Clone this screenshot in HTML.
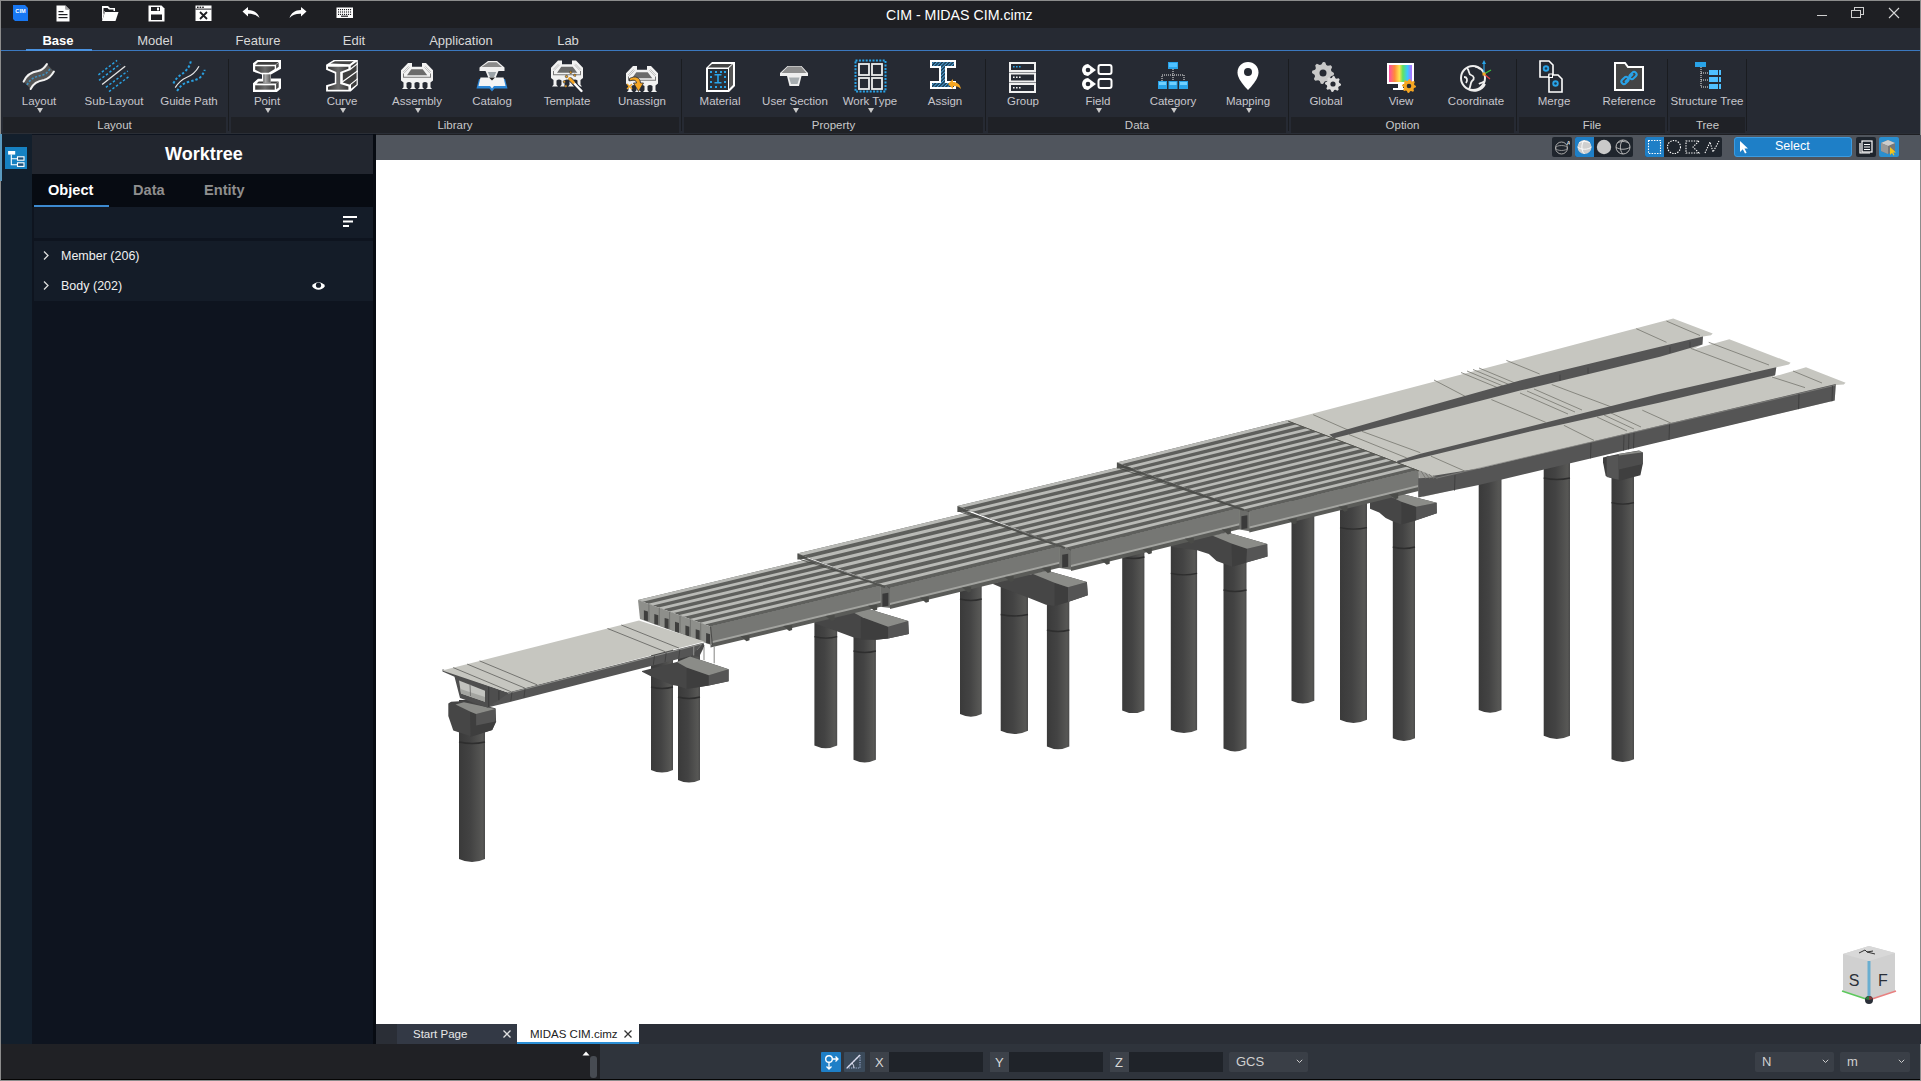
<!DOCTYPE html><html><head><meta charset="utf-8"><style>
*{margin:0;padding:0;box-sizing:border-box}
html,body{width:1921px;height:1081px;overflow:hidden;background:#1e1f23;font-family:"Liberation Sans",sans-serif}
.a{position:absolute}
.t{position:absolute;white-space:nowrap;line-height:1}
.mtab{position:absolute;top:34px;font-size:13px;color:#d8d8d8;white-space:nowrap;line-height:1;transform:translateX(-50%)}
.btxt{position:absolute;top:96px;font-size:11.5px;color:#c6c6cc;white-space:nowrap;line-height:1;transform:translateX(-50%)}
.arr{position:absolute;top:108px;width:0;height:0;border-left:3px solid transparent;border-right:3px solid transparent;border-top:5px solid #c8c8c8;transform:translateX(-50%)}
.glab{position:absolute;top:117px;height:16px;background:#1f2126}
.gtxt{position:absolute;top:120px;font-size:11.5px;color:#c9c9c9;line-height:1;white-space:nowrap;transform:translateX(-50%)}
.sep{position:absolute;top:59px;width:1px;height:72px;background:#1a1c21}
.ic{position:absolute;top:59px;width:32px;height:34px}
</style></head><body>
<div class="a" style="left:0px;top:0px;width:1921px;height:1081px;background:#1e1f23;"></div>
<div class="a" style="left:0px;top:0px;width:1921px;height:1px;background:#8c8c8c;"></div>
<svg class="a" style="left:12px;top:5px" width="17" height="17" viewBox="0 0 17 17"><path d="M1,0 H13 L16,3 V16 H3 L1,14 Z" fill="#1877f2"/><text x="8.5" y="7.6" font-size="5.6" font-weight="bold" fill="#fff" text-anchor="middle" font-family="Liberation Sans">CIM</text></svg>
<svg class="a" style="left:56px;top:5px" width="14" height="17" viewBox="0 0 14 17"><path d="M0.5,0.5 H9.5 L13.5,4.5 V16.5 H0.5 Z" fill="#fff"/><path d="M9.5,0.5 V4.5 H13.5" fill="#1e1f23"/><path d="M9.5,0.5 L13.5,4.5 H9.5Z" fill="#fff" opacity="0.6"/><rect x="2.5" y="6" width="5" height="1.2" fill="#1e1f23"/><rect x="2.5" y="9" width="9" height="1.2" fill="#1e1f23"/><rect x="2.5" y="12" width="9" height="1.2" fill="#1e1f23"/></svg>
<svg class="a" style="left:102px;top:6px" width="17" height="16" viewBox="0 0 17 16"><path d="M0,0 H6 L8,2 H13 V5 H3 L0,15 Z" fill="#fff"/><path d="M3,6 H16.5 L13.5,15 H0 Z" fill="#fff"/><path d="M1.5,2 H5.5 L7,3.5 H11.5 V5 H2.5 L1.5,9 Z" fill="#1e1f23"/></svg>
<svg class="a" style="left:148px;top:5px" width="17" height="17" viewBox="0 0 17 17"><path d="M0.5,0.5 H13.5 L16.5,3.5 V16.5 H0.5 Z" fill="#fff"/><rect x="3" y="2" width="9" height="4" fill="#1e1f23"/><rect x="9" y="2.6" width="2" height="2.8" fill="#fff"/><rect x="3" y="9.5" width="11" height="5.5" fill="#1e1f23"/></svg>
<svg class="a" style="left:195px;top:5px" width="17" height="16" viewBox="0 0 17 16"><rect x="0.5" y="0.5" width="16" height="15.5" fill="#fff"/><rect x="1.5" y="4" width="14" height="11" fill="#fff"/><rect x="0.5" y="3.6" width="16" height="1" fill="#1e1f23"/><rect x="2" y="1.6" width="1.6" height="1.4" fill="#1e1f23"/><rect x="4.6" y="1.6" width="1.6" height="1.4" fill="#1e1f23"/><rect x="7.2" y="1.6" width="1.6" height="1.4" fill="#1e1f23"/><path d="M5,7 L12,14 M12,7 L5,14" stroke="#1e1f23" stroke-width="1.8"/></svg>
<svg class="a" style="left:242px;top:7px" width="18" height="12" viewBox="0 0 18 12"><path d="M0.5,4.5 L6,0 V3 C12,3 16,6 17.5,11 C14.5,8 11,6.6 6,6.8 V9.6 Z" fill="#fff"/></svg>
<svg class="a" style="left:289px;top:7px" width="18" height="12" viewBox="0 0 18 12"><path d="M17.5,4.5 L12,0 V3 C6,3 2,6 0.5,11 C3.5,8 7,6.6 12,6.8 V9.6 Z" fill="#fff"/></svg>
<svg class="a" style="left:336px;top:7px" width="18" height="12" viewBox="0 0 18 12"><rect x="0.5" y="0.5" width="16.5" height="10.5" fill="#fff"/><rect x="2" y="2.0" width="1.1" height="1.2" fill="#1e1f23"/><rect x="2" y="4.4" width="1.1" height="1.2" fill="#1e1f23"/><rect x="2" y="6.8" width="1.1" height="1.2" fill="#1e1f23"/><rect x="4" y="2.0" width="1.1" height="1.2" fill="#1e1f23"/><rect x="4" y="4.4" width="1.1" height="1.2" fill="#1e1f23"/><rect x="4" y="6.8" width="1.1" height="1.2" fill="#1e1f23"/><rect x="6" y="2.0" width="1.1" height="1.2" fill="#1e1f23"/><rect x="6" y="4.4" width="1.1" height="1.2" fill="#1e1f23"/><rect x="6" y="6.8" width="1.1" height="1.2" fill="#1e1f23"/><rect x="8" y="2.0" width="1.1" height="1.2" fill="#1e1f23"/><rect x="8" y="4.4" width="1.1" height="1.2" fill="#1e1f23"/><rect x="8" y="6.8" width="1.1" height="1.2" fill="#1e1f23"/><rect x="10" y="2.0" width="1.1" height="1.2" fill="#1e1f23"/><rect x="10" y="4.4" width="1.1" height="1.2" fill="#1e1f23"/><rect x="10" y="6.8" width="1.1" height="1.2" fill="#1e1f23"/><rect x="12" y="2.0" width="1.1" height="1.2" fill="#1e1f23"/><rect x="12" y="4.4" width="1.1" height="1.2" fill="#1e1f23"/><rect x="12" y="6.8" width="1.1" height="1.2" fill="#1e1f23"/><rect x="14" y="2.0" width="1.1" height="1.2" fill="#1e1f23"/><rect x="14" y="4.4" width="1.1" height="1.2" fill="#1e1f23"/><rect x="14" y="6.8" width="1.1" height="1.2" fill="#1e1f23"/><rect x="5" y="8.6" width="7" height="1.2" fill="#1e1f23"/></svg>
<div class="t" style="left:886px;top:8px;font-size:14.2px;color:#ffffff;">CIM - MIDAS CIM.cimz</div>
<div class="a" style="left:1817px;top:15px;width:10px;height:1px;background:#d0d0d0;"></div>
<svg class="a" style="left:1851px;top:7px" width="14" height="12" viewBox="0 0 14 12"><rect x="3.5" y="0.5" width="9" height="7" fill="none" stroke="#d0d0d0"/><rect x="0.5" y="3.5" width="9" height="7" fill="#1e1f23" stroke="#d0d0d0"/></svg>
<svg class="a" style="left:1888px;top:7px" width="12" height="12" viewBox="0 0 12 12"><path d="M1,1 L11,11 M11,1 L1,11" stroke="#d8d8d8" stroke-width="1.1"/></svg>
<div class="a" style="left:1920px;top:0px;width:1px;height:1081px;background:#8c8c8c;"></div>
<div class="a" style="left:1px;top:28px;width:1919px;height:22px;background:#262a33;"></div>
<div class="a" style="left:1px;top:50px;width:1919px;height:1px;background:#3b78bf;"></div>
<div class="a" style="left:26px;top:49px;width:66px;height:2px;background:#4a92e0;"></div>
<div class="mtab" style="left:58px;color:#ffffff;font-weight:bold">Base</div>
<div class="mtab" style="left:155px">Model</div>
<div class="mtab" style="left:258px">Feature</div>
<div class="mtab" style="left:354px">Edit</div>
<div class="mtab" style="left:461px">Application</div>
<div class="mtab" style="left:568px">Lab</div>
<div class="a" style="left:1px;top:51px;width:1919px;height:83px;background:#262a33;"></div>
<div class="a" style="left:3px;top:117px;width:223px;height:16px;background:#1f2126;"></div>
<div class="gtxt" style="left:114.5px">Layout</div>
<div class="a" style="left:231px;top:117px;width:448px;height:16px;background:#1f2126;"></div>
<div class="gtxt" style="left:455.0px">Library</div>
<div class="a" style="left:684px;top:117px;width:299px;height:16px;background:#1f2126;"></div>
<div class="gtxt" style="left:833.5px">Property</div>
<div class="a" style="left:988px;top:117px;width:298px;height:16px;background:#1f2126;"></div>
<div class="gtxt" style="left:1137.0px">Data</div>
<div class="a" style="left:1291px;top:117px;width:223px;height:16px;background:#1f2126;"></div>
<div class="gtxt" style="left:1402.5px">Option</div>
<div class="a" style="left:1519px;top:117px;width:146px;height:16px;background:#1f2126;"></div>
<div class="gtxt" style="left:1592.0px">File</div>
<div class="a" style="left:1670px;top:117px;width:75px;height:16px;background:#1f2126;"></div>
<div class="gtxt" style="left:1707.5px">Tree</div>
<div class="a" style="left:228px;top:59px;width:1px;height:72px;background:#1a1c20;"></div>
<div class="a" style="left:681px;top:59px;width:1px;height:72px;background:#1a1c20;"></div>
<div class="a" style="left:985px;top:59px;width:1px;height:72px;background:#1a1c20;"></div>
<div class="a" style="left:1288px;top:59px;width:1px;height:72px;background:#1a1c20;"></div>
<div class="a" style="left:1516px;top:59px;width:1px;height:72px;background:#1a1c20;"></div>
<div class="a" style="left:1667px;top:59px;width:1px;height:72px;background:#1a1c20;"></div>
<div class="a" style="left:1746px;top:59px;width:1px;height:72px;background:#1a1c20;"></div>
<div class="a" style="left:1px;top:133px;width:1919px;height:1px;background:#2a2e36;"></div>
<svg class="a" style="left:23px;top:59px" width="32" height="34" viewBox="0 0 32 34" overflow="visible"><path d="M0.6,22.6 C3,17 8,13 15,12 C20,11 22,8 23.9,5.1 L30.9,12.6 C29,16 26,20 21,21 C14,22 10,25 7.6,30 Z" fill="#555"/><path d="M0.6,22.6 C3,17 8,13 15,12 C20,11 22,8 23.9,5.1" stroke="#f2f2f2" stroke-width="2" fill="none" stroke-linecap="round"/><path d="M7.6,30 C10,25 14,22 21,21 C26,20 29,16 30.9,12.6" stroke="#f2f2f2" stroke-width="2" fill="none" stroke-linecap="round"/><path d="M4,26 C7,20 12,17.5 18,16.5 C23,15.5 26,12 27.4,8.8" stroke="#3d8fbf" stroke-width="1.6" fill="none" stroke-dasharray="2.2 1.6"/></svg>
<div class="btxt" style="left:39px">Layout</div>
<div class="arr" style="left:39.5px"></div>
<svg class="a" style="left:98px;top:59px" width="32" height="34" viewBox="0 0 32 34" overflow="visible"><path d="M4.1,25.4 L27.2,7.3" stroke="#e6e6e6" stroke-width="1.3"/><path d="M0.4,15.8 L19.1,1.4 M1,21.4 L22.2,5.1 M7.9,28.3 L29.8,12 M11,32.6 L31.6,17" stroke="#2aa0e0" stroke-width="1.5" stroke-dasharray="2.4 2" fill="none"/></svg>
<div class="btxt" style="left:114px">Sub-Layout</div>
<svg class="a" style="left:173px;top:59px" width="32" height="34" viewBox="0 0 32 34" overflow="visible"><path d="M2.2,28.6 C6,23 9,20.5 13,18.8 C18,16.8 23,13 26,7.3" stroke="#e6e6e6" stroke-width="1.2" fill="none"/><path d="M0.4,24.5 C3,19 6,17 9,15 C13,12 17,8 17.9,1.4" stroke="#2aa0e0" stroke-width="2" stroke-dasharray="2.4 2" fill="none"/><path d="M4.1,32 C8,26 11,24 15,23 C21,21.5 26,20 27.5,18 C30,15 31.5,13 31.6,10.8" stroke="#2aa0e0" stroke-width="2" stroke-dasharray="2.4 2" fill="none"/></svg>
<div class="btxt" style="left:189px">Guide Path</div>
<svg class="a" style="left:251px;top:59px" width="32" height="34" viewBox="0 0 32 34" overflow="visible"><defs><linearGradient id="gI" x1="0" x2="1"><stop offset="0" stop-color="#3a3a3a"/><stop offset="0.5" stop-color="#6a6a6a"/><stop offset="1" stop-color="#3a3a3a"/></linearGradient><linearGradient id="gW" x1="0" x2="1"><stop offset="0" stop-color="#666"/><stop offset="0.3" stop-color="#aaa"/><stop offset="1" stop-color="#555"/></linearGradient></defs><path d="M2,4.2 L6.3,0.9 H30 V9.8 L20,15.5 V19.6 H30 V29.6 L25.9,33.1 H2 V24.2 L7,19.8 H11 V15.5 L2,12.6 Z" fill="#fff"/><path d="M4.2,5.7 L7,3.1 H27.7 L24.4,5.7 Z" fill="#3d3d3d"/><path d="M4.2,7.2 H23.7 V10 L17.7,13.7 H10 L4.2,10.7 Z" fill="url(#gI)"/><path d="M25.1,5.5 L27.7,3.7 V7.7 L25.1,9.8 Z" fill="#4a4a4a"/><path d="M12.2,15.3 H19.6 V23.7 H12.2 Z" fill="url(#gW)"/><path d="M5.5,24.6 L7.7,22.4 H12.2 V23.7 H19.6 V22.4 H27.7 L24.8,24.6 Z" fill="#3d3d3d"/><path d="M4.2,26.3 H23.7 V30.7 H4.2 Z" fill="url(#gI)"/><path d="M25.1,24.4 L27.7,22.6 V28.5 L25.1,30.5 Z" fill="#4a4a4a"/></svg>
<div class="btxt" style="left:267px">Point</div>
<div class="arr" style="left:267.5px"></div>
<svg class="a" style="left:326px;top:59px" width="32" height="34" viewBox="0 0 32 34" overflow="visible"><path d="M0.1,5.7 L7.7,1.1 H31.8 V25.9 L24.7,32.6 H0.1 V26.3 L8.8,23.7 V14.4 L0.1,10.7 Z" fill="#fff"/><path d="M4.5,4.5 L9,2.3 H28.5 L23.8,5.3 Z" fill="#444"/><path d="M24.8,7 L30.6,2.8 V25.4 L25,29.8 V26 L16.8,23.6 V14 L24.8,11 Z" fill="#3e3e3e"/><path d="M2,7.7 H22.4 V9.8 L14.2,13 V25 L22.4,27.6 V30.8 H2 V27.8 L10.3,25 V13 L2,9.6 Z" fill="url(#gI)"/><path d="M24,5.9 L29.6,1.4 M24.4,10.3 L31.8,4.4 M16.2,22.9 L31.8,11.8 M24,25.9 L31.8,19.6" stroke="#fff" stroke-width="1.2"/></svg>
<div class="btxt" style="left:342px">Curve</div>
<div class="arr" style="left:342.5px"></div>
<svg class="a" style="left:401px;top:59px" width="32" height="34" viewBox="0 0 32 34" overflow="visible"><g transform="translate(0,0) scale(1.0)"><path d="M0,11.3 L7,4 H11 V7.7 H21 V4 H25 L32,11.3 V21.5 L29.5,23.5 V28.3 L31,30 H25 L26.5,28.3 V24 Q24,21.8 21.5,24 V28.3 L23,30 H17 L18.5,28.3 V24 Q16,21.8 13.5,24 V28.3 L15,30 H9 L10.5,28.3 V24 Q8,21.8 5.5,24 V28.3 L7,30 H1 L2.5,28.3 V23.5 L0,21.5 Z" fill="#f2f2f2"/><path d="M6,16.3 L10.3,10.3 H21.7 L26.3,16.3 Z" fill="#6b6b6b"/><path d="M2.2,13 L7.6,7.3 M3.2,14 L8.6,8.3 M29.8,13 L24.4,7.3 M28.8,14 L23.4,8.3" stroke="#9a9a9a" stroke-width="0.6"/><path d="M2,14.5 V18.8 H30 V14.5 H29 V17.8 H3 V14.5 Z" fill="#7a7a7a"/></g></svg>
<div class="btxt" style="left:417px">Assembly</div>
<div class="arr" style="left:417.5px"></div>
<svg class="a" style="left:476px;top:57.5px" width="32" height="34" viewBox="0 0 32 34" overflow="visible"><path d="M12,3 H21 L28.5,9.5 V13 H3.5 V9.5 Z" fill="#f0f0f0"/><path d="M12.5,4.3 H20.5 L26,9 H5.5 Z" fill="#8a8a8a"/><path d="M9.5,13 H22.5 L19.5,20 H12.5 Z" fill="#eee"/><path d="M11.8,14 H20.2 L18,19 H14 Z" fill="#9ba3a8"/><path d="M0.5,30.5 L3,21 H29 L31.5,30.5 H18.5 L16,33.5 L13.5,30.5 Z" fill="#2b86d6"/><path d="M2.5,28 L4.5,19.5 H27.5 L29.5,28 H18 L16,30.5 L14,28 Z" fill="#f4f4f4"/><path d="M13,19.5 H19 L16,22.5 Z" fill="#222"/></svg>
<div class="btxt" style="left:492px">Catalog</div>
<svg class="a" style="left:551px;top:59px" width="32" height="34" viewBox="0 0 32 34" overflow="visible"><g transform="translate(0,-2.5) scale(1.0)"><path d="M0,11.3 L7,4 H11 V7.7 H21 V4 H25 L32,11.3 V21.5 L29.5,23.5 V28.3 L31,30 H25 L26.5,28.3 V24 Q24,21.8 21.5,24 V28.3 L23,30 H17 L18.5,28.3 V24 Q16,21.8 13.5,24 V28.3 L15,30 H9 L10.5,28.3 V24 Q8,21.8 5.5,24 V28.3 L7,30 H1 L2.5,28.3 V23.5 L0,21.5 Z" fill="#f2f2f2"/><path d="M6,16.3 L10.3,10.3 H21.7 L26.3,16.3 Z" fill="#6b6b6b"/><path d="M2.2,13 L7.6,7.3 M3.2,14 L8.6,8.3 M29.8,13 L24.4,7.3 M28.8,14 L23.4,8.3" stroke="#9a9a9a" stroke-width="0.6"/><path d="M2,14.5 V18.8 H30 V14.5 H29 V17.8 H3 V14.5 Z" fill="#7a7a7a"/></g><path d="M17,17 L24,16 L27,26 L20,27 Z" fill="#262a33" opacity="0"/><path d="M19.5,20.5 L30.5,32" stroke="#262a33" stroke-width="4.2" stroke-linecap="round"/><path d="M19.5,20.5 L30.5,32" stroke="#fff" stroke-width="2.4" stroke-linecap="round"/><path d="M18.5,19.5 L22.5,23.5" stroke="#f5a623" stroke-width="2.6" stroke-linecap="round"/><path d="M14,17 l2,-1 1,2 -2,1z M18.5,12.5 l2,-0.5 0.5,2.2 -2,0.5z M23,15 l2,0.5 -0.5,2 -2,-0.5z M12,22 l2,-0.5 0.6,2 -2,0.6z M13.5,26.5 l2,-0.7 0.7,2 -2,0.7z" fill="#f5a623" stroke="#262a33" stroke-width="0.5"/></svg>
<div class="btxt" style="left:567px">Template</div>
<svg class="a" style="left:626px;top:59px" width="32" height="34" viewBox="0 0 32 34" overflow="visible"><g transform="translate(0,3) scale(1.0)"><path d="M0,11.3 L7,4 H11 V7.7 H21 V4 H25 L32,11.3 V21.5 L29.5,23.5 V28.3 L31,30 H25 L26.5,28.3 V24 Q24,21.8 21.5,24 V28.3 L23,30 H17 L18.5,28.3 V24 Q16,21.8 13.5,24 V28.3 L15,30 H9 L10.5,28.3 V24 Q8,21.8 5.5,24 V28.3 L7,30 H1 L2.5,28.3 V23.5 L0,21.5 Z" fill="#f2f2f2"/><path d="M6,16.3 L10.3,10.3 H21.7 L26.3,16.3 Z" fill="#6b6b6b"/><path d="M2.2,13 L7.6,7.3 M3.2,14 L8.6,8.3 M29.8,13 L24.4,7.3 M28.8,14 L23.4,8.3" stroke="#9a9a9a" stroke-width="0.6"/><path d="M2,14.5 V18.8 H30 V14.5 H29 V17.8 H3 V14.5 Z" fill="#7a7a7a"/></g><path d="M1,25 L6,30 M6,25 L1,30" stroke="#f5a623" stroke-width="1.3"/><path d="M3.5,19.5 C9,16.5 14,18 14.5,24 H17.5 L12.5,32.5 L7.5,24 H10.5 C10.3,21 7.5,20.5 3.5,22 Z" fill="#f5a623" stroke="#262a33" stroke-width="0.8"/></svg>
<div class="btxt" style="left:642px">Unassign</div>
<svg class="a" style="left:704px;top:60px" width="32" height="34" viewBox="0 0 32 34" overflow="visible"><path d="M2,8 L8,2 H31 V26 L25,32 H2 Z" fill="#fff"/><path d="M4,9 H24 V30 H4 Z" fill="#2a2f36"/><path d="M25,8 L29,4 V25 L25,29 Z" fill="#555"/><path d="M4,7.5 L8,4 H28 L24,7.5 Z" fill="#444"/><path d="M6,11 h2 v2 h-2z M11,11 h2 v2 h-2z M16,11 h2 v2 h-2z M20,11 h2 v2 h-2z M6,26 h2 v2 h-2z M11,26 h2 v2 h-2z M16,26 h2 v2 h-2z M20,26 h2 v2 h-2z M6,16 h2 v2 h-2z M6,21 h2 v2 h-2z M20,16 h2 v2 h-2z M20,21 h2 v2 h-2z" fill="#29a3e8"/><path d="M10.5,14 H17.5 V15.5 H14.8 V22 H17.5 V23.5 H10.5 V22 H13.2 V15.5 H10.5Z" fill="#29a3e8"/></svg>
<div class="btxt" style="left:720px">Material</div>
<svg class="a" style="left:779px;top:59px" width="32" height="34" viewBox="0 0 32 34" overflow="visible"><path d="M8.5,7 H22.5 L29,14 V17 H1 V14 Z" fill="#eee"/><path d="M9,7.5 H22 L27.5,14 H2.5 Z" fill="#8e8e8e"/><path d="M8,17 H22.5 L20,27 H10.5 Z" fill="#eee"/><path d="M10,18.5 H20.5 L18.5,25 H12 Z" fill="#a7adb0"/></svg>
<div class="btxt" style="left:795px">User Section</div>
<div class="arr" style="left:795.5px"></div>
<svg class="a" style="left:854px;top:59px" width="32" height="34" viewBox="0 0 32 34" overflow="visible"><rect x="1.5" y="1.5" width="30" height="31" fill="none" stroke="#29a3e8" stroke-width="2" stroke-dasharray="2 1.4"/><rect x="5" y="5" width="10" height="11" fill="none" stroke="#eee" stroke-width="1.8"/><rect x="18" y="5" width="10" height="11" fill="none" stroke="#eee" stroke-width="1.8"/><rect x="5" y="19" width="10" height="11" fill="none" stroke="#eee" stroke-width="1.8"/><rect x="18" y="19" width="10" height="11" fill="none" stroke="#eee" stroke-width="1.8"/></svg>
<div class="btxt" style="left:870px">Work Type</div>
<div class="arr" style="left:870.5px"></div>
<svg class="a" style="left:929px;top:59px" width="32" height="34" viewBox="0 0 32 34" overflow="visible"><defs><pattern id="hatch" width="2.5" height="2.5" patternUnits="userSpaceOnUse" patternTransform="rotate(45)"><rect width="2.5" height="2.5" fill="#1b3a52"/><rect width="1" height="2.5" fill="#4fa3d8"/></pattern></defs><path d="M1,1 H27 V9 H18 V22 H27 V30 H1 V22 H10 V9 H1 Z" fill="#fff"/><path d="M3,3 H25 V7 H16 V24 H25 V28 H3 V24 H12 V7 H3 Z" fill="url(#hatch)"/><path d="M19,25 L24,20 V23 C28,23 31,25 32,30 C30,28 28,27 24,27 V30 Z" fill="#f5a623"/></svg>
<div class="btxt" style="left:945px">Assign</div>
<svg class="a" style="left:1007px;top:60.5px" width="32" height="34" viewBox="0 0 32 34" overflow="visible"><rect x="3" y="2.0" width="25" height="8" fill="none" stroke="#f0f0f0" stroke-width="2"/><rect x="3" y="12.5" width="25" height="8" fill="none" stroke="#f0f0f0" stroke-width="2"/><rect x="3" y="23.0" width="25" height="8" fill="none" stroke="#f0f0f0" stroke-width="2"/><path d="M6,5 h1.6 v1.6 h-1.6z M9,5 h1.6 v1.6 h-1.6z M12,5 h1.6 v1.6 h-1.6z" fill="#29a3e8"/><path d="M6,15.5 h1.6 v1.6 h-1.6z M9,15.5 h1.6 v1.6 h-1.6z M12,15.5 h1.6 v1.6 h-1.6z" fill="#f0f0f0"/><path d="M6,26.0 h1.6 v1.6 h-1.6z M9,26.0 h1.6 v1.6 h-1.6z M12,26.0 h1.6 v1.6 h-1.6z" fill="#f0f0f0"/></svg>
<div class="btxt" style="left:1023px">Group</div>
<svg class="a" style="left:1082px;top:60.5px" width="32" height="34" viewBox="0 0 32 34" overflow="visible"><path d="M6,3 A6,6 0 1 0 6,15 L14,9 Z" fill="#fff"/><circle cx="6" cy="9" r="2.3" fill="#262a33"/><path d="M6,17 A6,6 0 1 0 6,29 L14,23 Z" fill="#fff"/><circle cx="6" cy="23" r="2.3" fill="#262a33"/><rect x="16.5" y="4" width="13" height="9" rx="2" fill="none" stroke="#fff" stroke-width="2"/><rect x="16.5" y="18" width="13" height="9" rx="2" fill="none" stroke="#fff" stroke-width="2"/></svg>
<div class="btxt" style="left:1098px">Field</div>
<div class="arr" style="left:1098.5px"></div>
<svg class="a" style="left:1157px;top:60.5px" width="32" height="34" viewBox="0 0 32 34" overflow="visible"><rect x="11" y="1" width="10" height="7" fill="#29a3e8"/><rect x="12" y="2" width="8" height="4" fill="#4fc0ff"/><path d="M16,8 V14 M5,20 V14 H27 V20 M16,14 V20" stroke="#eee" stroke-width="1" stroke-dasharray="1 1" fill="none"/><rect x="1" y="20" width="9" height="8" fill="#29a3e8"/><rect x="11.5" y="20" width="9" height="8" fill="#29a3e8"/><rect x="22" y="20" width="9" height="8" fill="#29a3e8"/><rect x="2" y="21" width="7" height="3" fill="#6fd0ff"/><rect x="12.5" y="21" width="7" height="3" fill="#6fd0ff"/><rect x="23" y="21" width="7" height="3" fill="#6fd0ff"/></svg>
<div class="btxt" style="left:1173px">Category</div>
<div class="arr" style="left:1173.5px"></div>
<svg class="a" style="left:1232px;top:60.5px" width="32" height="34" viewBox="0 0 32 34" overflow="visible"><path d="M16,1 C10,1 5.5,5.5 5.5,11.5 C5.5,19 16,29 16,29 C16,29 26.5,19 26.5,11.5 C26.5,5.5 22,1 16,1 Z" fill="#fff"/><circle cx="16" cy="11" r="4" fill="#262a33"/></svg>
<div class="btxt" style="left:1248px">Mapping</div>
<div class="arr" style="left:1248.5px"></div>
<svg class="a" style="left:1310px;top:60.5px" width="32" height="34" viewBox="0 0 32 34" overflow="visible"><polygon points="24.00,12.00 23.79,14.15 20.93,15.28 20.13,16.77 20.78,19.78 19.11,21.15 16.28,19.93 14.67,20.42 13.00,23.00 10.85,22.79 9.72,19.93 8.23,19.13 5.22,19.78 3.85,18.11 5.07,15.28 4.58,13.67 2.00,12.00 2.21,9.85 5.07,8.72 5.87,7.23 5.22,4.22 6.89,2.85 9.72,4.07 11.33,3.58 13.00,1.00 15.15,1.21 16.28,4.07 17.77,4.87 20.78,4.22 22.15,5.89 20.93,8.72 21.42,10.33" fill="#c8c8c8"/><circle cx="13" cy="12" r="3.5" fill="#262a33"/><polygon points="31.00,23.00 30.85,24.56 28.77,25.39 28.19,26.47 28.66,28.66 27.44,29.65 25.39,28.77 24.22,29.12 23.00,31.00 21.44,30.85 20.61,28.77 19.53,28.19 17.34,28.66 16.35,27.44 17.23,25.39 16.88,24.22 15.00,23.00 15.15,21.44 17.23,20.61 17.81,19.53 17.34,17.34 18.56,16.35 20.61,17.23 21.78,16.88 23.00,15.00 24.56,15.15 25.39,17.23 26.47,17.81 28.66,17.34 29.65,18.56 28.77,20.61 29.12,21.78" fill="#dcdcdc"/><circle cx="23" cy="23" r="2.6" fill="#262a33"/></svg>
<div class="btxt" style="left:1326px">Global</div>
<svg class="a" style="left:1385px;top:60.5px" width="32" height="34" viewBox="0 0 32 34" overflow="visible"><defs><linearGradient id="rb" x1="0" x2="1"><stop offset="0" stop-color="#ff4da6"/><stop offset="0.25" stop-color="#ff8c3a"/><stop offset="0.45" stop-color="#ffe34d"/><stop offset="0.6" stop-color="#5fe35f"/><stop offset="0.8" stop-color="#3ac8ff"/><stop offset="1" stop-color="#b46bff"/></linearGradient></defs><rect x="2" y="2" width="27" height="21" fill="#fff"/><rect x="4" y="4" width="23" height="17" fill="url(#rb)"/><rect x="13" y="23" width="5" height="4" fill="#fff"/><rect x="8" y="27" width="14" height="2" fill="#fff"/><polygon points="31.00,25.00 30.87,26.37 29.04,27.09 28.54,28.03 28.95,29.95 27.89,30.82 26.09,30.04 25.07,30.36 24.00,32.00 22.63,31.87 21.91,30.04 20.97,29.54 19.05,29.95 18.18,28.89 18.96,27.09 18.64,26.07 17.00,25.00 17.13,23.63 18.96,22.91 19.46,21.97 19.05,20.05 20.11,19.18 21.91,19.96 22.93,19.64 24.00,18.00 25.37,18.13 26.09,19.96 27.03,20.46 28.95,20.05 29.82,21.11 29.04,22.91 29.36,23.93" fill="#f5a623"/><circle cx="24" cy="25" r="2.3" fill="#262a33"/></svg>
<div class="btxt" style="left:1401px">View</div>
<svg class="a" style="left:1460px;top:60px" width="32" height="34" viewBox="0 0 32 34" overflow="visible"><circle cx="13" cy="18" r="12" fill="none" stroke="#eee" stroke-width="2"/><path d="M7,8 C10,11 8,14 11,15 C14,16 15,19 12,21 C10,23 11,27 9,29 M4,17 C7,17 8,20 6,23 M19,24 C21,22 24,23 24,21" stroke="#eee" stroke-width="1.8" fill="none"/><path d="M15,7 C17,6 18,8 20,9" stroke="#eee" stroke-width="1.8" fill="none"/><path d="M24,14 V2" stroke="#29a3e8" stroke-width="1.2"/><path d="M22,4 L24,0 L26,4Z" fill="#29a3e8"/><path d="M24,14 L31,10" stroke="#3ec43e" stroke-width="1.2"/><path d="M24,14 L30,19" stroke="#e83a3a" stroke-width="1.2"/><rect x="22.5" y="12.5" width="3" height="3" fill="#f5a623"/><path d="M25,24 A12,12 0 0 1 8,29" stroke="#eee" stroke-width="2" fill="none"/></svg>
<div class="btxt" style="left:1476px">Coordinate</div>
<svg class="a" style="left:1538px;top:60px" width="32" height="34" viewBox="0 0 32 34" overflow="visible"><path d="M2,1 H11 L15,5 V17 H2 Z" fill="none" stroke="#fff" stroke-width="1.6"/><circle cx="8" cy="8.5" r="3.2" fill="#29a3e8"/><circle cx="8" cy="8.5" r="1.3" fill="#1b3a52"/><path d="M11,15 H20 L24,19 V32 H11 Z" fill="#262a33" stroke="#fff" stroke-width="1.6"/><circle cx="17.5" cy="23.5" r="3.2" fill="#29a3e8"/><circle cx="17.5" cy="23.5" r="1.3" fill="#1b3a52"/><rect x="11" y="14" width="3.5" height="3.5" fill="#262a33" stroke="#fff" stroke-width="1"/></svg>
<div class="btxt" style="left:1554px">Merge</div>
<svg class="a" style="left:1613px;top:60px" width="32" height="34" viewBox="0 0 32 34" overflow="visible"><path d="M2,3 H12 L15,7 H30 V30 H2 Z" fill="#444" stroke="#fff" stroke-width="2"/><path d="M12,22 L20,14" stroke="#29a3e8" stroke-width="2"/><rect x="8" y="18" width="8" height="5" rx="2.5" transform="rotate(-45 12 20.5)" fill="none" stroke="#29a3e8" stroke-width="2"/><rect x="16" y="13" width="8" height="5" rx="2.5" transform="rotate(-45 20 15.5)" fill="none" stroke="#29a3e8" stroke-width="2"/></svg>
<div class="btxt" style="left:1629px">Reference</div>
<svg class="a" style="left:1691px;top:60px" width="32" height="34" viewBox="0 0 32 34" overflow="visible"><rect x="4" y="2" width="11" height="5" fill="#29a3e8"/><path d="M10,7 V27 H17 M10,13 H17 M10,20 H17" stroke="#eee" stroke-width="1" stroke-dasharray="1 1" fill="none"/><rect x="18" y="10" width="9" height="5" fill="#4fc0ff"/><rect x="28" y="10" width="2" height="5" fill="#4fc0ff"/><rect x="18" y="17" width="9" height="5" fill="#4fc0ff"/><rect x="28" y="17" width="2" height="5" fill="#4fc0ff"/><rect x="18" y="24" width="9" height="5" fill="#4fc0ff"/><rect x="28" y="24" width="2" height="5" fill="#4fc0ff"/></svg>
<div class="btxt" style="left:1707px">Structure Tree</div>
<div class="a" style="left:0px;top:1px;width:1px;height:1080px;background:#8c8c8c;"></div>
<div class="a" style="left:1px;top:134px;width:32px;height:910px;background:#131f2c;"></div>
<div class="a" style="left:0px;top:134px;width:2px;height:47px;background:#5a9ac0;"></div>
<svg class="a" style="left:5px;top:147px" width="22" height="22" viewBox="0 0 22 22"><rect width="22" height="22" fill="#1681c2"/><rect x="3.1" y="4" width="7.1" height="3.6" fill="#fff"/><path d="M6.3,7.6 V17.7 H12.5 M6.3,11.7 H12.5" stroke="#fff" stroke-width="1.1" fill="none"/><rect x="12.5" y="9.8" width="6.5" height="3.4" fill="#1b4f7a" stroke="#fff" stroke-width="1.1"/><rect x="12.5" y="15.8" width="6.5" height="3.6" fill="#1b4f7a" stroke="#fff" stroke-width="1.1"/></svg>
<div class="a" style="left:32px;top:134px;width:344px;height:910px;background:#0e141f;"></div>
<div class="a" style="left:32px;top:135px;width:341px;height:39px;background:#22262f;"></div>
<div class="t" style="left:165px;top:145px;font-size:18px;color:#ffffff;font-weight:bold">Worktree</div>
<div class="a" style="left:32px;top:174px;width:344px;height:33px;background:#070b12;"></div>
<div class="t" style="left:48px;top:183px;font-size:14.6px;color:#ffffff;font-weight:bold">Object</div>
<div class="t" style="left:133px;top:183px;font-size:14.6px;color:#8f8f8f;font-weight:bold">Data</div>
<div class="t" style="left:204px;top:183px;font-size:14.6px;color:#8f8f8f;font-weight:bold">Entity</div>
<div class="a" style="left:34px;top:205px;width:75px;height:2px;background:#3d8ad0;"></div>
<div class="a" style="left:34px;top:207px;width:339px;height:31px;background:#141c28;"></div>
<svg class="a" style="left:343px;top:216px" width="15" height="12" viewBox="0 0 15 12"><rect x="0" y="0" width="14" height="2" fill="#fff"/><rect x="0" y="4.5" width="10" height="2" fill="#fff"/><rect x="0" y="9" width="6" height="2" fill="#fff"/></svg>
<div class="a" style="left:34px;top:241px;width:339px;height:60px;background:#141c28;"></div>
<svg class="a" style="left:42px;top:250px" width="8" height="11" viewBox="0 0 8 11"><path d="M2,1.5 L6,5.5 L2,9.5" stroke="#ddd" stroke-width="1.3" fill="none"/></svg>
<svg class="a" style="left:42px;top:280px" width="8" height="11" viewBox="0 0 8 11"><path d="M2,1.5 L6,5.5 L2,9.5" stroke="#ddd" stroke-width="1.3" fill="none"/></svg>
<div class="t" style="left:61px;top:250px;font-size:12.5px;color:#f0f0f0;">Member (206)</div>
<div class="t" style="left:61px;top:280px;font-size:12.5px;color:#f0f0f0;">Body (202)</div>
<svg class="a" style="left:311px;top:281px" width="15" height="11" viewBox="0 0 15 11"><path d="M1,5 C4,0 11,0 14,5 C11,10 4,10 1,5Z" fill="#fff"/><circle cx="7.5" cy="4.2" r="2.6" fill="#141c28"/><path d="M3.5,6 C5,8 10,8 11.5,6" stroke="#141c28" stroke-width="0" fill="none"/></svg>
<div class="a" style="left:373px;top:134px;width:3px;height:910px;background:#070b12;"></div>
<div class="a" style="left:376px;top:135px;width:1545px;height:25px;background:#50555d;"></div>
<div class="a" style="left:376px;top:160px;width:1544px;height:864px;background:#ffffff;"></div>
<svg class="a" style="left:376px;top:160px" width="1544" height="864" viewBox="376 160 1544 864"><defs><linearGradient id="colg" x1="0" x2="1" y1="0" y2="0"><stop offset="0" stop-color="#3a3a3a"/><stop offset="0.45" stop-color="#434343"/><stop offset="0.9" stop-color="#575755"/><stop offset="1" stop-color="#4a4a4a"/></linearGradient></defs><path d="M459.0,700.0 L485.0,700.0 L485.0,858.9 Q472.0,865.1 459.0,858.9 Z" fill="url(#colg)"/>
<path d="M651.0,640.0 L673.0,640.0 L673.0,769.9 Q662.0,775.1 651.0,769.9 Z" fill="url(#colg)"/>
<path d="M678.0,650.0 L700.0,650.0 L700.0,780.0 Q689.0,785.2 678.0,780.0 Z" fill="url(#colg)"/>
<path d="M814.4,605.0 L837.2,605.0 L837.2,745.6 Q825.8,751.0 814.4,745.6 Z" fill="url(#colg)"/>
<path d="M853.5,620.0 L875.9,620.0 L875.9,759.8 Q864.7,765.2 853.5,759.8 Z" fill="url(#colg)"/>
<path d="M960.0,575.0 L981.7,575.0 L981.7,714.1 Q970.9,719.3 960.0,714.1 Z" fill="url(#colg)"/>
<path d="M1000.7,565.0 L1028.0,565.0 L1028.0,730.7 Q1014.4,737.3 1000.7,730.7 Z" fill="url(#colg)"/>
<path d="M1046.9,585.0 L1069.3,585.0 L1069.3,746.6 Q1058.1,752.0 1046.9,746.6 Z" fill="url(#colg)"/>
<path d="M1122.2,535.0 L1144.4,535.0 L1144.4,710.4 Q1133.3,715.8 1122.2,710.4 Z" fill="url(#colg)"/>
<path d="M1170.8,525.0 L1197.1,525.0 L1197.1,729.9 Q1183.9,736.3 1170.8,729.9 Z" fill="url(#colg)"/>
<path d="M1223.5,545.0 L1246.5,545.0 L1246.5,748.6 Q1235.0,754.2 1223.5,748.6 Z" fill="url(#colg)"/>
<path d="M1291.5,495.0 L1314.3,495.0 L1314.3,700.7 Q1302.9,706.1 1291.5,700.7 Z" fill="url(#colg)"/>
<path d="M1340.0,485.0 L1367.0,485.0 L1367.0,719.7 Q1353.5,726.1 1340.0,719.7 Z" fill="url(#colg)"/>
<path d="M1392.8,500.0 L1415.0,500.0 L1415.0,738.3 Q1403.9,743.7 1392.8,738.3 Z" fill="url(#colg)"/>
<path d="M1478.7,465.0 L1501.5,465.0 L1501.5,710.0 Q1490.1,715.4 1478.7,710.0 Z" fill="url(#colg)"/>
<path d="M1543.7,450.0 L1570.0,450.0 L1570.0,735.8 Q1556.8,742.2 1543.7,735.8 Z" fill="url(#colg)"/>
<path d="M1611.5,460.0 L1634.0,460.0 L1634.0,759.3 Q1622.8,764.7 1611.5,759.3 Z" fill="url(#colg)"/>
<path d="M459.0,742.0 Q472.0,745.0 485.0,742.0" stroke="#2e2e2e" stroke-width="1.3" fill="none"/>
<path d="M651.0,687.0 Q662.0,690.0 673.0,687.0" stroke="#2e2e2e" stroke-width="1.3" fill="none"/>
<path d="M678.0,697.0 Q689.0,700.0 700.0,697.0" stroke="#2e2e2e" stroke-width="1.3" fill="none"/>
<path d="M814.4,636.7 Q825.8,639.7 837.2,636.7" stroke="#2e2e2e" stroke-width="1.3" fill="none"/>
<path d="M853.5,651.0 Q864.7,654.0 875.9,651.0" stroke="#2e2e2e" stroke-width="1.3" fill="none"/>
<path d="M960.0,599.0 Q970.9,602.0 981.7,599.0" stroke="#2e2e2e" stroke-width="1.3" fill="none"/>
<path d="M1000.7,614.5 Q1014.4,617.5 1028.0,614.5" stroke="#2e2e2e" stroke-width="1.3" fill="none"/>
<path d="M1046.9,630.0 Q1058.1,633.0 1069.3,630.0" stroke="#2e2e2e" stroke-width="1.3" fill="none"/>
<path d="M1122.2,557.0 Q1133.3,560.0 1144.4,557.0" stroke="#2e2e2e" stroke-width="1.3" fill="none"/>
<path d="M1170.8,573.4 Q1183.9,576.4 1197.1,573.4" stroke="#2e2e2e" stroke-width="1.3" fill="none"/>
<path d="M1223.5,590.0 Q1235.0,593.0 1246.5,590.0" stroke="#2e2e2e" stroke-width="1.3" fill="none"/>
<path d="M1340.0,527.6 Q1353.5,530.6 1367.0,527.6" stroke="#2e2e2e" stroke-width="1.3" fill="none"/>
<path d="M1392.8,547.0 Q1403.9,550.0 1415.0,547.0" stroke="#2e2e2e" stroke-width="1.3" fill="none"/>
<path d="M1543.7,478.0 Q1556.8,481.0 1570.0,478.0" stroke="#2e2e2e" stroke-width="1.3" fill="none"/>
<path d="M1611.5,502.6 Q1622.8,505.6 1634.0,502.6" stroke="#2e2e2e" stroke-width="1.3" fill="none"/>
<polygon points="448.3,703.6 451.1,701.7 463.9,701.1 495.5,708.3 496.1,721.6 492.2,730.0 471.6,736.6 453.3,730.5 448.3,716.1" fill="#464646" />
<polygon points="470.0,711.4 476.1,713.9 496.1,721.6 492.2,730.0 471.6,736.6 470.6,736.6" fill="#3e3e3e" />
<polygon points="476.1,713.9 495.5,708.9 495.5,721.6 476.1,725.5" fill="#555555" />
<polygon points="455.5,704.4 463.9,702.2 495.5,708.9 476.1,713.9 470.0,711.4" fill="#8b8c88" />
<polygon points="642.0,671.1 676.9,662.1 690.1,656.6 728.6,669.3 728.6,681.3 708.8,685.5 686.5,689.1 678.1,686.1 672.1,684.9 650.4,675.9 642.0,671.7" fill="#464646" />
<polygon points="686.5,667.5 708.8,675.3 708.8,685.5 686.5,689.1" fill="#3e3e3e" />
<polygon points="708.8,675.3 728.6,669.3 728.6,681.3 708.8,685.5" fill="#555555" />
<polygon points="676.9,662.1 690.1,656.6 728.6,669.3 708.8,675.3 686.5,667.5" fill="#8b8c88" />
<polygon points="814.9,622.2 847.9,613.1 869.3,609.2 908.2,620.9 908.8,633.9 888.1,638.4 875.8,639.7 854.4,637.7 836.9,631.3 814.9,623.5" fill="#464646" />
<polygon points="860.9,616.4 888.1,626.7 888.1,638.4 875.8,639.7 860.9,639.7" fill="#3e3e3e" />
<polygon points="888.1,626.7 908.2,620.9 908.8,633.9 888.1,638.4" fill="#555555" />
<polygon points="853.1,612.2 869.3,609.2 908.2,620.9 888.1,626.7 862.2,617.3" fill="#8b8c88" />
<polygon points="993.0,583.3 1029.9,574.6 1047.4,570.7 1086.9,582.0 1087.8,595.3 1068.0,602.1 1054.5,606.0 1046.0,604.7 1027.9,597.6 1000.7,587.2 993.0,584.0" fill="#464646" />
<polygon points="1054.5,582.7 1068.0,587.2 1068.0,602.1 1054.5,606.0" fill="#3e3e3e" />
<polygon points="1068.0,587.2 1086.9,582.0 1087.8,595.3 1068.0,602.1" fill="#555555" />
<polygon points="1031.8,573.6 1047.4,570.7 1086.9,582.0 1068.0,587.2 1054.5,582.7" fill="#8b8c88" />
<polygon points="1171.3,544.8 1210.2,535.7 1227.6,532.5 1267.2,544.1 1267.5,556.5 1246.4,562.6 1232.2,566.8 1216.6,561.0 1208.9,553.9 1197.2,550.3 1171.3,547.0" fill="#464646" />
<polygon points="1231.5,543.5 1247.0,548.7 1246.4,562.6 1232.2,566.8" fill="#3e3e3e" />
<polygon points="1247.0,548.7 1267.2,544.1 1267.5,556.5 1246.4,562.6" fill="#555555" />
<polygon points="1212.1,535.4 1227.6,532.5 1267.2,544.1 1247.0,548.7 1231.5,543.5" fill="#8b8c88" />
<polygon points="1370.0,499.4 1387.6,497.6 1402.4,493.9 1436.6,502.7 1436.8,513.3 1416.2,520.2 1401.4,524.4 1393.1,521.6 1385.7,517.9 1379.2,512.4 1370.0,508.7" fill="#464646" />
<polygon points="1401.4,501.7 1416.2,506.8 1416.2,520.2 1401.4,524.4" fill="#3e3e3e" />
<polygon points="1416.2,506.8 1436.6,502.7 1436.8,513.3 1416.2,520.2" fill="#555555" />
<polygon points="1390.3,496.4 1402.4,493.9 1436.6,502.7 1416.2,506.8 1401.4,501.7" fill="#8b8c88" />
<polygon points="1603.0,457.6 1618.7,453.9 1639.0,450.6 1642.8,452.5 1642.8,464.1 1640.4,475.2 1619.6,480.7 1611.3,478.0 1605.7,476.1 1603.0,462.2" fill="#3f3f3f" />
<polygon points="1606.7,456.2 1618.7,455.3 1618.7,479.8 1606.7,477.0" fill="#555555" />
<polygon points="1618.7,455.3 1642.8,452.5 1642.8,464.1 1618.7,469.6" fill="#4d4d4d" />
<polygon points="1618.2,454.0 1640.0,450.8 1642.0,452.6 1619.0,455.5" fill="#8b8c88" />
<polygon points="879.7,585.7 891.0,588.0 891.0,608.0 879.7,606.7" fill="#6c6d6a" />
<polygon points="882.4,593.7 888.4,592.7 888.4,605.7 882.4,606.7" fill="#3a3a3a" />
<polygon points="1058.4,546.7 1072.0,550.0 1072.0,570.0 1058.4,567.7" fill="#6c6d6a" />
<polygon points="1062.2,554.7 1068.2,553.7 1068.2,566.7 1062.2,567.7" fill="#3a3a3a" />
<polygon points="1238.4,508.3 1250.4,511.6 1250.4,531.6 1238.4,529.3" fill="#6c6d6a" />
<polygon points="1241.4,516.3 1247.4,515.3 1247.4,528.3 1241.4,529.3" fill="#3a3a3a" />
<polygon points="710.5,626.5 880.7,585.7 880.7,606.7 710.5,647.5" fill="#5a5b58" />
<polygon points="710.5,626.5 880.7,585.7 880.7,602.7 710.5,643.5" fill="#a3a4a0" />
<polygon points="710.5,626.5 880.7,585.7 880.7,600.7 710.5,641.5" fill="#767774" />
<polygon points="740.5,636.3 749.5,635.3 749.5,640.3 746.5,641.3" fill="#4a4b48" />
<polygon points="783.1,626.1 792.1,625.1 792.1,630.1 789.1,631.1" fill="#4a4b48" />
<polygon points="825.6,615.9 834.6,614.9 834.6,619.9 831.6,620.9" fill="#4a4b48" />
<polygon points="868.2,605.7 877.2,604.7 877.2,609.7 874.2,610.7" fill="#4a4b48" />
<polygon points="638.0,600.0 807.0,559.4 880.7,585.7 710.5,626.5" fill="#5e5f5c" />
<polygon points="638.0,600.0 807.0,559.4 811.7,561.1 642.7,601.7" fill="#b9bab6" />
<polygon points="648.4,603.8 817.5,563.2 822.3,564.8 653.0,605.5" fill="#b9bab6" />
<polygon points="658.7,607.6 828.1,566.9 832.8,568.6 663.4,609.3" fill="#b9bab6" />
<polygon points="669.1,611.4 838.6,570.7 843.3,572.4 673.7,613.1" fill="#b9bab6" />
<polygon points="679.4,615.1 849.1,574.4 853.9,576.1 684.1,616.8" fill="#b9bab6" />
<polygon points="689.8,618.9 859.6,578.2 864.4,579.9 694.4,620.6" fill="#b9bab6" />
<polygon points="700.1,622.7 870.2,581.9 874.9,583.6 704.8,624.4" fill="#b9bab6" />
<polygon points="638.0,600.0 710.5,626.5 712.5,645.5 640.0,619.0" fill="#8e8f8b" />
<polygon points="643.9,610.3 647.9,611.5 647.9,621.3 643.9,620.1" fill="#3e3e3d" />
<line x1="648.9" y1="604.3" x2="648.9" y2="621.3" stroke="#6a6b68" stroke-width="0.8" />
<polygon points="654.3,614.1 658.3,615.3 658.3,625.1 654.3,623.9" fill="#3e3e3d" />
<line x1="659.3" y1="608.1" x2="659.3" y2="625.1" stroke="#6a6b68" stroke-width="0.8" />
<polygon points="664.6,617.9 668.6,619.1 668.6,628.9 664.6,627.7" fill="#3e3e3d" />
<line x1="669.6" y1="611.9" x2="669.6" y2="628.9" stroke="#6a6b68" stroke-width="0.8" />
<polygon points="675.0,621.7 679.0,622.9 679.0,632.7 675.0,631.5" fill="#3e3e3d" />
<line x1="680.0" y1="615.7" x2="680.0" y2="632.7" stroke="#6a6b68" stroke-width="0.8" />
<polygon points="685.4,625.5 689.4,626.7 689.4,636.5 685.4,635.3" fill="#3e3e3d" />
<line x1="690.4" y1="619.5" x2="690.4" y2="636.5" stroke="#6a6b68" stroke-width="0.8" />
<polygon points="695.7,629.3 699.7,630.5 699.7,640.3 695.7,639.1" fill="#3e3e3d" />
<line x1="700.7" y1="623.3" x2="700.7" y2="640.3" stroke="#6a6b68" stroke-width="0.8" />
<polygon points="706.1,633.1 710.1,634.3 710.1,644.1 706.1,642.9" fill="#3e3e3d" />
<line x1="711.1" y1="627.1" x2="711.1" y2="644.1" stroke="#6a6b68" stroke-width="0.8" />
<line x1="710.5" y1="626.5" x2="712.5" y2="645.5" stroke="#4a4a48" stroke-width="1" />
<polygon points="890.0,588.0 1059.4,546.7 1059.4,567.7 890.0,609.0" fill="#5a5b58" />
<polygon points="890.0,588.0 1059.4,546.7 1059.4,563.7 890.0,605.0" fill="#a3a4a0" />
<polygon points="890.0,588.0 1059.4,546.7 1059.4,561.7 890.0,603.0" fill="#767774" />
<polygon points="919.9,597.7 928.9,596.7 928.9,601.7 925.9,602.7" fill="#4a4b48" />
<polygon points="962.2,587.4 971.2,586.4 971.2,591.4 968.2,592.4" fill="#4a4b48" />
<polygon points="1004.6,577.1 1013.6,576.1 1013.6,581.1 1010.6,582.1" fill="#4a4b48" />
<polygon points="1041.8,568.0 1050.8,567.0 1050.8,572.0 1047.8,573.0" fill="#4a4b48" />
<polygon points="797.4,553.5 969.4,512.2 1059.4,546.7 890.0,588.0" fill="#5e5f5c" />
<polygon points="797.4,553.5 969.4,512.2 974.5,514.1 802.6,555.4" fill="#b9bab6" />
<polygon points="809.0,557.8 980.6,516.5 985.7,518.5 814.2,559.8" fill="#b9bab6" />
<polygon points="820.5,562.1 991.9,520.8 997.0,522.8 825.8,564.1" fill="#b9bab6" />
<polygon points="832.1,566.4 1003.1,525.1 1008.2,527.1 837.3,568.4" fill="#b9bab6" />
<polygon points="843.7,570.8 1014.4,529.5 1019.5,531.4 848.9,572.7" fill="#b9bab6" />
<polygon points="855.3,575.1 1025.7,533.8 1030.7,535.7 860.5,577.0" fill="#b9bab6" />
<polygon points="866.9,579.4 1036.9,538.1 1042.0,540.0 872.1,581.3" fill="#b9bab6" />
<polygon points="878.4,583.7 1048.2,542.4 1053.2,544.3 883.6,585.6" fill="#b9bab6" />
<polygon points="797.4,553.5 808.5,557.6 800.4,559.5 797.4,559.5" fill="#4f504d" />
<line x1="800.4" y1="559.5" x2="890.0" y2="588.0" stroke="#3f403d" stroke-width="1.0" opacity="0.7"/>
<polygon points="1071.0,550.0 1239.4,508.3 1239.4,529.3 1071.0,571.0" fill="#5a5b58" />
<polygon points="1071.0,550.0 1239.4,508.3 1239.4,525.3 1071.0,567.0" fill="#a3a4a0" />
<polygon points="1071.0,550.0 1239.4,508.3 1239.4,523.3 1071.0,565.0" fill="#767774" />
<polygon points="1100.7,559.7 1109.7,558.7 1109.7,563.7 1106.7,564.7" fill="#4a4b48" />
<polygon points="1142.8,549.2 1151.8,548.2 1151.8,553.2 1148.8,554.2" fill="#4a4b48" />
<polygon points="1184.9,538.8 1193.9,537.8 1193.9,542.8 1190.9,543.8" fill="#4a4b48" />
<polygon points="1221.9,529.6 1230.9,528.6 1230.9,533.6 1227.9,534.6" fill="#4a4b48" />
<polygon points="957.4,505.9 1126.0,465.6 1239.4,508.3 1071.0,550.0" fill="#5e5f5c" />
<polygon points="957.4,505.9 1126.0,465.6 1130.6,467.3 962.0,507.7" fill="#b9bab6" />
<polygon points="967.7,509.9 1136.3,469.5 1140.9,471.2 972.4,511.7" fill="#b9bab6" />
<polygon points="978.1,513.9 1146.6,473.4 1151.3,475.1 982.7,515.7" fill="#b9bab6" />
<polygon points="988.4,517.9 1156.9,477.2 1161.6,479.0 993.0,519.7" fill="#b9bab6" />
<polygon points="998.7,521.9 1167.2,481.1 1171.9,482.9 1003.4,523.7" fill="#b9bab6" />
<polygon points="1009.0,525.9 1177.5,485.0 1182.2,486.8 1013.7,527.7" fill="#b9bab6" />
<polygon points="1019.4,530.0 1187.9,488.9 1192.5,490.6 1024.0,531.8" fill="#b9bab6" />
<polygon points="1029.7,534.0 1198.2,492.8 1202.8,494.5 1034.3,535.8" fill="#b9bab6" />
<polygon points="1040.0,538.0 1208.5,496.7 1213.1,498.4 1044.7,539.8" fill="#b9bab6" />
<polygon points="1050.3,542.0 1218.8,500.5 1223.4,502.3 1055.0,543.8" fill="#b9bab6" />
<polygon points="1060.7,546.0 1229.1,504.4 1233.7,506.2 1065.3,547.8" fill="#b9bab6" />
<polygon points="957.4,505.9 971.0,511.2 960.4,511.9 957.4,511.9" fill="#4f504d" />
<line x1="960.4" y1="511.9" x2="1071.0" y2="550.0" stroke="#3f403d" stroke-width="1.0" opacity="0.7"/>
<polygon points="1249.4,511.6 1418.6,470.0 1418.6,491.0 1249.4,532.6" fill="#5a5b58" />
<polygon points="1249.4,511.6 1418.6,470.0 1418.6,487.0 1249.4,528.6" fill="#a3a4a0" />
<polygon points="1249.4,511.6 1418.6,470.0 1418.6,485.0 1249.4,526.6" fill="#767774" />
<polygon points="1287.7,519.2 1296.7,518.2 1296.7,523.2 1293.7,524.2" fill="#4a4b48" />
<polygon points="1338.5,506.7 1347.5,505.7 1347.5,510.7 1344.5,511.7" fill="#4a4b48" />
<polygon points="1389.2,494.2 1398.2,493.2 1398.2,498.2 1395.2,499.2" fill="#4a4b48" />
<polygon points="1116.9,462.5 1287.4,420.3 1418.6,470.0 1249.4,511.6" fill="#5e5f5c" />
<polygon points="1116.9,462.5 1287.4,420.3 1291.9,422.0 1121.5,464.2" fill="#b9bab6" />
<polygon points="1127.1,466.3 1297.5,424.1 1302.0,425.8 1131.7,468.0" fill="#b9bab6" />
<polygon points="1137.3,470.1 1307.6,427.9 1312.1,429.7 1141.9,471.8" fill="#b9bab6" />
<polygon points="1147.5,473.8 1317.7,431.8 1322.2,433.5 1152.1,475.5" fill="#b9bab6" />
<polygon points="1157.7,477.6 1327.8,435.6 1332.3,437.3 1162.3,479.3" fill="#b9bab6" />
<polygon points="1167.9,481.4 1337.9,439.4 1342.4,441.1 1172.4,483.1" fill="#b9bab6" />
<polygon points="1178.1,485.2 1348.0,443.2 1352.5,445.0 1182.6,486.9" fill="#b9bab6" />
<polygon points="1188.2,488.9 1358.0,447.1 1362.6,448.8 1192.8,490.6" fill="#b9bab6" />
<polygon points="1198.4,492.7 1368.1,450.9 1372.7,452.6 1203.0,494.4" fill="#b9bab6" />
<polygon points="1208.6,496.5 1378.2,454.7 1382.8,456.4 1213.2,498.2" fill="#b9bab6" />
<polygon points="1218.8,500.3 1388.3,458.5 1392.9,460.3 1223.4,502.0" fill="#b9bab6" />
<polygon points="1229.0,504.0 1398.4,462.4 1403.0,464.1 1233.6,505.7" fill="#b9bab6" />
<polygon points="1239.2,507.8 1408.5,466.2 1413.0,467.9 1243.8,509.5" fill="#b9bab6" />
<polygon points="1116.9,462.5 1132.8,468.4 1119.9,468.5 1116.9,468.5" fill="#4f504d" />
<line x1="1119.9" y1="468.5" x2="1249.4" y2="511.6" stroke="#3f403d" stroke-width="1.0" opacity="0.7"/>
<line x1="801.0" y1="557.0" x2="885.0" y2="587.0" stroke="#4a4b48" stroke-width="2.2" opacity="0.85"/>
<line x1="963.0" y1="511.0" x2="1065.0" y2="548.0" stroke="#4a4b48" stroke-width="2.2" opacity="0.85"/>
<line x1="1121.0" y1="466.0" x2="1244.0" y2="510.0" stroke="#4a4b48" stroke-width="2.2" opacity="0.85"/>
<polygon points="508.1,692.0 703.3,642.8 692.0,655.6 487.5,707.6" fill="#555555" />
<polygon points="442.5,669.3 442.5,671.5 454.5,676.8 460.0,698.1 487.8,707.8 508.1,693.5 507.8,692.5" fill="#4e4e4e" />
<polygon points="459.0,680.5 485.0,690.7 485.0,701.8 461.0,693.5" fill="#c2c3bf" />
<polygon points="460.5,689.0 485.0,697.0 485.0,701.8 461.0,693.5" fill="#a4a5a1" />
<line x1="470.0" y1="684.5" x2="470.5" y2="696.0" stroke="#777775" stroke-width="1" />
<polygon points="442.2,670.4 639.0,620.5 704.6,641.5 507.8,692.5" fill="#c6c6c0" />
<line x1="453.2" y1="667.6" x2="510.9" y2="691.7" stroke="#6a6a67" stroke-width="0.9" />
<line x1="467.2" y1="664.1" x2="524.9" y2="688.1" stroke="#6a6a67" stroke-width="0.9" />
<line x1="479.6" y1="660.9" x2="537.3" y2="684.9" stroke="#6a6a67" stroke-width="0.9" />
<line x1="607.5" y1="628.5" x2="665.2" y2="651.7" stroke="#6a6a67" stroke-width="0.9" />
<line x1="621.3" y1="625.0" x2="679.0" y2="648.1" stroke="#6a6a67" stroke-width="0.9" />
<line x1="508.1" y1="693.3" x2="703.3" y2="643.6" stroke="#9d9e9a" stroke-width="0.8" />
<line x1="512.0" y1="692.0" x2="510.8" y2="701.2" stroke="#3c3c3c" stroke-width="0.8" />
<line x1="525.1" y1="688.7" x2="523.9" y2="697.8" stroke="#3c3c3c" stroke-width="0.8" />
<line x1="654.5" y1="655.7" x2="653.3" y2="664.9" stroke="#3c3c3c" stroke-width="0.8" />
<line x1="666.2" y1="652.7" x2="665.0" y2="662.0" stroke="#3c3c3c" stroke-width="0.8" />
<line x1="679.9" y1="649.3" x2="678.7" y2="658.5" stroke="#3c3c3c" stroke-width="0.8" />
<line x1="488.7" y1="687.0" x2="488.7" y2="707.0" stroke="#333" stroke-width="0.8" />
<line x1="498.9" y1="690.5" x2="498.9" y2="700.3" stroke="#333" stroke-width="0.8" />
<polygon points="692.0,655.6 703.3,642.8 704.5,646.0 699.0,657.0" fill="#4a4a4a" />
<line x1="693.7" y1="645.0" x2="693.7" y2="655.4" stroke="#8f8f8d" stroke-width="1.1" />
<line x1="704.0" y1="647.0" x2="704.0" y2="660.3" stroke="#8f8f8d" stroke-width="1.1" />
<line x1="714.2" y1="646.4" x2="714.2" y2="663.3" stroke="#8f8f8d" stroke-width="1.1" />
<polygon points="1287.4,420.3 1673.2,318.6 1712.7,333.5 1711.0,335.2 1703.0,336.6 1702.4,344.4 1692.7,349.5 1729.3,339.2 1790.6,362.7 1788.9,364.4 1776.3,367.3 1775.1,375.3 1770.6,377.6 1806.0,367.3 1845.6,382.7 1843.8,384.4 1835.8,385.0 1834.7,400.5 1422.7,497.0 1419.4,478.0 1418.6,470.0" fill="#c6c6c0" />
<line x1="1313.2" y1="414.7" x2="1352.5" y2="432.0" stroke="#76766f" stroke-width="0.8" />
<line x1="1434.0" y1="380.0" x2="1465.7" y2="396.6" stroke="#76766f" stroke-width="0.8" />
<line x1="1461.0" y1="372.5" x2="1497.4" y2="387.6" stroke="#76766f" stroke-width="0.8" />
<line x1="1467.0" y1="371.0" x2="1503.0" y2="386.0" stroke="#76766f" stroke-width="0.8" />
<line x1="1473.0" y1="369.5" x2="1509.0" y2="384.5" stroke="#76766f" stroke-width="0.8" />
<line x1="1479.0" y1="368.0" x2="1515.0" y2="383.0" stroke="#76766f" stroke-width="0.8" />
<line x1="1506.4" y1="360.4" x2="1539.7" y2="374.0" stroke="#76766f" stroke-width="0.8" />
<line x1="1636.3" y1="328.7" x2="1666.5" y2="342.3" stroke="#76766f" stroke-width="0.8" />
<line x1="1666.5" y1="321.1" x2="1700.0" y2="335.5" stroke="#76766f" stroke-width="0.8" />
<line x1="1349.0" y1="434.6" x2="1406.7" y2="457.9" stroke="#76766f" stroke-width="0.8" />
<line x1="1491.4" y1="399.6" x2="1545.7" y2="422.3" stroke="#76766f" stroke-width="0.8" />
<line x1="1520.0" y1="393.0" x2="1568.0" y2="414.0" stroke="#76766f" stroke-width="0.8" />
<line x1="1527.0" y1="391.0" x2="1575.0" y2="412.0" stroke="#76766f" stroke-width="0.8" />
<line x1="1534.0" y1="389.0" x2="1582.0" y2="410.0" stroke="#76766f" stroke-width="0.8" />
<line x1="1551.7" y1="384.5" x2="1612.0" y2="407.2" stroke="#76766f" stroke-width="0.8" />
<line x1="1690.6" y1="348.3" x2="1751.0" y2="371.0" stroke="#76766f" stroke-width="0.8" />
<line x1="1708.7" y1="342.3" x2="1769.0" y2="365.0" stroke="#76766f" stroke-width="0.8" />
<line x1="1431.0" y1="456.2" x2="1464.8" y2="471.1" stroke="#76766f" stroke-width="0.8" />
<line x1="1362.0" y1="431.4" x2="1420.3" y2="452.7" stroke="#76766f" stroke-width="0.8" />
<line x1="1563.8" y1="425.3" x2="1594.0" y2="440.4" stroke="#76766f" stroke-width="0.8" />
<line x1="1597.0" y1="417.0" x2="1627.0" y2="431.0" stroke="#76766f" stroke-width="0.8" />
<line x1="1604.0" y1="415.0" x2="1634.0" y2="429.0" stroke="#76766f" stroke-width="0.8" />
<line x1="1611.0" y1="413.0" x2="1641.0" y2="427.0" stroke="#76766f" stroke-width="0.8" />
<line x1="1642.3" y1="410.2" x2="1672.5" y2="423.8" stroke="#76766f" stroke-width="0.8" />
<line x1="1772.0" y1="377.0" x2="1805.0" y2="387.6" stroke="#76766f" stroke-width="0.8" />
<line x1="1793.0" y1="371.0" x2="1822.0" y2="383.0" stroke="#76766f" stroke-width="0.8" />
<polygon points="1329.4,434.5 1420.0,408.4 1520.0,380.4 1660.0,346.7 1703.0,336.6 1702.4,344.4 1660.0,356.8 1520.0,390.6 1420.0,416.6 1333.9,438.3" fill="#555555" />
<polygon points="1397.0,461.0 1420.6,453.7 1530.0,426.6 1660.0,393.8 1776.3,367.3 1775.1,375.3 1660.0,402.5 1530.0,431.5 1420.6,458.0 1398.0,463.5" fill="#555555" />
<polygon points="1418.2,478.2 1480.0,468.2 1835.8,384.0 1834.7,400.5 1480.0,484.7 1418.2,497.5" fill="#555555" />
<line x1="1436.0" y1="478.2" x2="1835.5" y2="385.2" stroke="#8a8a86" stroke-width="0.7" />
<polygon points="1418.6,470.0 1436.3,477.2 1419.4,478.2" fill="#9c9c98" />
<line x1="1421.0" y1="471.0" x2="1426.0" y2="479.0" stroke="#6a6a66" stroke-width="0.7" />
<line x1="1425.0" y1="472.6" x2="1430.0" y2="479.0" stroke="#6a6a66" stroke-width="0.7" />
<line x1="1429.0" y1="474.2" x2="1434.0" y2="479.0" stroke="#6a6a66" stroke-width="0.7" />
<line x1="1433.0" y1="475.8" x2="1438.0" y2="479.0" stroke="#6a6a66" stroke-width="0.7" />
<line x1="1455.0" y1="475.1" x2="1454.5" y2="490.6" stroke="#3a3a3a" stroke-width="0.8" />
<line x1="1591.0" y1="442.9" x2="1590.5" y2="458.4" stroke="#3a3a3a" stroke-width="0.8" />
<line x1="1624.0" y1="435.1" x2="1623.5" y2="450.6" stroke="#3a3a3a" stroke-width="0.8" />
<line x1="1629.0" y1="433.9" x2="1628.5" y2="449.4" stroke="#3a3a3a" stroke-width="0.8" />
<line x1="1634.0" y1="432.8" x2="1633.5" y2="448.3" stroke="#3a3a3a" stroke-width="0.8" />
<line x1="1669.5" y1="424.4" x2="1669.0" y2="439.9" stroke="#3a3a3a" stroke-width="0.8" />
<line x1="1799.0" y1="393.7" x2="1798.5" y2="409.2" stroke="#3a3a3a" stroke-width="0.8" />
<line x1="1832.5" y1="385.8" x2="1832.0" y2="401.3" stroke="#3a3a3a" stroke-width="0.8" />
<line x1="1560.0" y1="374.7" x2="1560.0" y2="380.7" stroke="#3a3a3a" stroke-width="0.7" />
<line x1="1588.0" y1="367.6" x2="1588.0" y2="373.6" stroke="#3a3a3a" stroke-width="0.7" />
<line x1="1670.0" y1="346.7" x2="1670.0" y2="352.7" stroke="#3a3a3a" stroke-width="0.7" />
<line x1="1690.0" y1="341.6" x2="1690.0" y2="347.6" stroke="#3a3a3a" stroke-width="0.7" />
<line x1="1288.0" y1="421.0" x2="1419.0" y2="471.0" stroke="#55554f" stroke-width="1" />
</svg>
<div class="a" style="left:1552px;top:137px;width:20px;height:20px;background:#1f252d;border-radius:2px"></div>
<svg class="a" style="left:1554px;top:139px" width="16" height="16" viewBox="0 0 16 16"><circle cx="7.5" cy="9" r="6" fill="none" stroke="#aaa" stroke-width="1"/><ellipse cx="7.5" cy="9" rx="6" ry="2.5" fill="none" stroke="#aaa" stroke-width="0.8"/><text x="12.5" y="6" font-size="6" fill="#ddd" font-weight="bold" font-family="Liberation Sans">A</text></svg>
<div class="a" style="left:1575px;top:137px;width:58px;height:20px;background:#1f252d;border-radius:2px"></div>
<div class="a" style="left:1575px;top:137px;width:19px;height:20px;background:#1e7fc7;border-radius:2px 0 0 2px"></div>
<svg class="a" style="left:1576px;top:139px" width="17" height="16" viewBox="0 0 17 16"><circle cx="8.5" cy="8" r="7" fill="#cfcfcf"/><path d="M1.5,8 C5,11 12,11 15.5,8 M8.5,1 C5,4 5,12 8.5,15 M3,4 C6,2 11,2 14,4" stroke="#fff" stroke-width="0.9" fill="none"/></svg>
<svg class="a" style="left:1595px;top:139px" width="18" height="16" viewBox="0 0 18 16"><circle cx="9" cy="8" r="7.2" fill="#c9c9c9"/></svg>
<svg class="a" style="left:1614px;top:139px" width="18" height="16" viewBox="0 0 18 16"><circle cx="9" cy="8" r="7" fill="none" stroke="#bbb" stroke-width="1"/><path d="M2,8 C5,11 13,11 16,8 M9,1 C5.5,4 5.5,12 9,15 M3.5,4 C6.5,2 11.5,2 14.5,4" stroke="#bbb" stroke-width="0.9" fill="none"/></svg>
<div class="a" style="left:1645px;top:137px;width:77px;height:20px;background:#1f252d;border-radius:2px"></div>
<div class="a" style="left:1645px;top:137px;width:19px;height:20px;background:#1e7fc7;border-radius:2px 0 0 2px"></div>
<svg class="a" style="left:1647px;top:139px" width="15" height="16" viewBox="0 0 15 16"><rect x="1.5" y="1.5" width="12" height="13" fill="none" stroke="#fff" stroke-width="1.1" stroke-dasharray="1.5 1.2"/></svg>
<svg class="a" style="left:1665px;top:139px" width="18" height="16" viewBox="0 0 18 16"><circle cx="9" cy="8" r="6.5" fill="none" stroke="#fff" stroke-width="1.1" stroke-dasharray="1.4 1.2"/></svg>
<svg class="a" style="left:1684px;top:139px" width="18" height="16" viewBox="0 0 18 16"><path d="M2,2 H15 L9,8 L15,14 H2 Z" fill="none" stroke="#fff" stroke-width="1.1" stroke-dasharray="1.4 1.2"/></svg>
<svg class="a" style="left:1703px;top:139px" width="18" height="16" viewBox="0 0 18 16"><path d="M2,14 L7,3 L10,13 L16,2" fill="none" stroke="#fff" stroke-width="1.1" stroke-dasharray="1.4 1.2"/></svg>
<div class="a" style="left:1734px;top:137px;width:118px;height:20px;background:#1e7fc7;border-radius:3px;border:1px solid #3c9be0"></div>
<svg class="a" style="left:1739px;top:140px" width="10" height="14" viewBox="0 0 10 14"><path d="M1,1 L1,12 L3.8,9.2 L6,13.5 L7.6,12.7 L5.5,8.5 L9,8.5 Z" fill="#fff"/></svg>
<div class="t" style="left:1775px;top:140px;font-size:12.5px;color:#ffffff;">Select</div>
<div class="a" style="left:1856px;top:137px;width:20px;height:20px;background:#1f252d;border-radius:2px"></div>
<svg class="a" style="left:1858px;top:139px" width="16" height="16" viewBox="0 0 16 16"><rect x="4" y="2" width="10" height="11" fill="none" stroke="#fff" stroke-width="1.2"/><path d="M2,4 V14 H12" fill="none" stroke="#fff" stroke-width="1.2"/><path d="M6,5.5 H12 M6,8 H12 M6,10.5 H12" stroke="#fff" stroke-width="1"/></svg>
<div class="a" style="left:1879px;top:137px;width:20px;height:20px;background:#2a8fd0;border-radius:2px"></div>
<svg class="a" style="left:1880px;top:139px" width="18" height="17" viewBox="0 0 18 17"><path d="M8,1 L15,4 V12 L8,15 L1,12 V4 Z" fill="#777"/><path d="M8,1 L15,4 L8,7 L1,4Z" fill="#ccc"/><path d="M8,7 V15 L1,12 V4Z" fill="#999"/><path d="M10,8 L10,16 L12,14 L13.5,16.5 L14.5,16 L13.2,13.5 L16,13.5Z" fill="#f5c518"/></svg>
<svg class="a" style="left:1838px;top:944px" width="62" height="64" viewBox="0 0 62 64"><path d="M5,10 L31,2 L57,9 V47 L31,56 L5,47 Z" fill="#d0d0d0"/>
<path d="M5,10 L31,2 L57,9 L31,17 Z" fill="#d8d8d8"/>
<path d="M21,9 L27,6 L29,8 L35,7 M29,8 L37,10" stroke="#333" stroke-width="1" fill="none"/>
<path d="M4,47 L31,56" stroke="#5cc85c" stroke-width="1.6"/>
<path d="M31,56 L58,47" stroke="#e88080" stroke-width="1.6"/>
<rect x="29.5" y="17" width="3" height="38" fill="#6aaed0"/>
<text x="16" y="42" font-size="16" fill="#2a2f38" text-anchor="middle" font-family="Liberation Sans">S</text>
<text x="45" y="42" font-size="16" fill="#2a2f38" text-anchor="middle" font-family="Liberation Sans">F</text>
<circle cx="31" cy="56" r="4" fill="#2a2f38"/><path d="M27.5,55 A4,4 0 0 1 31,52 V56Z" fill="#2b7a3a"/><path d="M31,52 A4,4 0 0 1 34.6,55 L31,56Z" fill="#8a3a3a"/></svg>
<div class="a" style="left:376px;top:1024px;width:1545px;height:20px;background:#2a2e36;"></div>
<div class="a" style="left:397px;top:1024px;width:120px;height:20px;background:#333945;"></div>
<div class="t" style="left:413px;top:1029px;font-size:11.5px;color:#e8e8e8;">Start Page</div>
<svg class="a" style="left:502px;top:1029px" width="10" height="10" viewBox="0 0 10 10"><path d="M1.5,1.5 L8.5,8.5 M8.5,1.5 L1.5,8.5" stroke="#e0e0e0" stroke-width="1.3"/></svg>
<div class="a" style="left:517px;top:1024px;width:122px;height:20px;background:#ffffff;"></div>
<div class="a" style="left:517px;top:1042px;width:122px;height:2px;background:#2b8fd6;"></div>
<div class="t" style="left:530px;top:1029px;font-size:11.5px;color:#222222;">MIDAS CIM.cimz</div>
<svg class="a" style="left:623px;top:1029px" width="10" height="10" viewBox="0 0 10 10"><path d="M1.5,1.5 L8.5,8.5 M8.5,1.5 L1.5,8.5" stroke="#333" stroke-width="1.3"/></svg>
<div class="a" style="left:1px;top:1044px;width:1919px;height:36px;background:#202125;"></div>
<div class="a" style="left:600px;top:1044px;width:1320px;height:36px;background:#2f343c;"></div>
<div class="a" style="left:1px;top:1079px;width:1919px;height:1px;background:#050505;"></div>
<div class="a" style="left:0px;top:1080px;width:1921px;height:1px;background:#8c8c8c;"></div>
<svg class="a" style="left:582px;top:1051px" width="8" height="5" viewBox="0 0 8 5"><path d="M0.5,4.5 L4,0.5 L7.5,4.5Z" fill="#fff"/></svg>
<div class="a" style="left:590px;top:1056px;width:7px;height:22px;background:#474b52;border-radius:3px"></div>
<div class="a" style="left:821px;top:1052px;width:20px;height:20px;background:#1e7fc7;border-radius:1px"></div>
<svg class="a" style="left:822px;top:1053px" width="18" height="18" viewBox="0 0 18 18"><circle cx="7" cy="6" r="3.3" fill="none" stroke="#fff" stroke-width="1.4"/><path d="M7,9.5 V16 M4.5,13.5 L7,16 L9.5,13.5 M10.5,6 H16 M13.5,3.5 L16,6 L13.5,8.5" stroke="#fff" stroke-width="1.3" fill="none"/></svg>
<div class="a" style="left:844px;top:1052px;width:21px;height:20px;background:#3b4a5a;border-radius:1px"></div>
<svg class="a" style="left:845px;top:1053px" width="19" height="18" viewBox="0 0 19 18"><path d="M2,15 L15,2 V15 Z" fill="none" stroke="#9ac" stroke-width="1.1" stroke-dasharray="1.3 1"/><path d="M2,15 L15,2" stroke="#dde" stroke-width="1.2"/><path d="M9,15 A7,7 0 0 0 7,10" stroke="#dde" stroke-width="1" fill="none"/></svg>
<div class="a" style="left:870px;top:1052px;width:19px;height:20px;background:#3d424a;"></div>
<div class="a" style="left:889px;top:1052px;width:94px;height:20px;background:#1f2329;"></div>
<div class="t" style="left:875px;top:1056px;font-size:13px;color:#d8d8d8;">X</div>
<div class="a" style="left:990px;top:1052px;width:19px;height:20px;background:#3d424a;"></div>
<div class="a" style="left:1009px;top:1052px;width:94px;height:20px;background:#1f2329;"></div>
<div class="t" style="left:995px;top:1056px;font-size:13px;color:#d8d8d8;">Y</div>
<div class="a" style="left:1110px;top:1052px;width:19px;height:20px;background:#3d424a;"></div>
<div class="a" style="left:1129px;top:1052px;width:94px;height:20px;background:#1f2329;"></div>
<div class="t" style="left:1115px;top:1056px;font-size:13px;color:#d8d8d8;">Z</div>
<div class="a" style="left:1229px;top:1052px;width:79px;height:20px;background:#3a3f47;border-radius:2px"></div>
<div class="t" style="left:1236px;top:1055px;font-size:13px;color:#d0d0d0;">GCS</div>
<svg class="a" style="left:1296px;top:1059px" width="7" height="5" viewBox="0 0 7 5"><path d="M0.8,0.8 L3.5,3.5 L6.2,0.8" stroke="#ccc" stroke-width="1" fill="none"/></svg>
<div class="a" style="left:1755px;top:1052px;width:79px;height:20px;background:#3a3f47;border-radius:2px"></div>
<div class="t" style="left:1762px;top:1055px;font-size:13px;color:#d0d0d0;">N</div>
<svg class="a" style="left:1822px;top:1059px" width="7" height="5" viewBox="0 0 7 5"><path d="M0.8,0.8 L3.5,3.5 L6.2,0.8" stroke="#ccc" stroke-width="1" fill="none"/></svg>
<div class="a" style="left:1840px;top:1052px;width:70px;height:20px;background:#3a3f47;border-radius:2px"></div>
<div class="t" style="left:1847px;top:1055px;font-size:13px;color:#d0d0d0;">m</div>
<svg class="a" style="left:1898px;top:1059px" width="7" height="5" viewBox="0 0 7 5"><path d="M0.8,0.8 L3.5,3.5 L6.2,0.8" stroke="#ccc" stroke-width="1" fill="none"/></svg>
</body></html>
